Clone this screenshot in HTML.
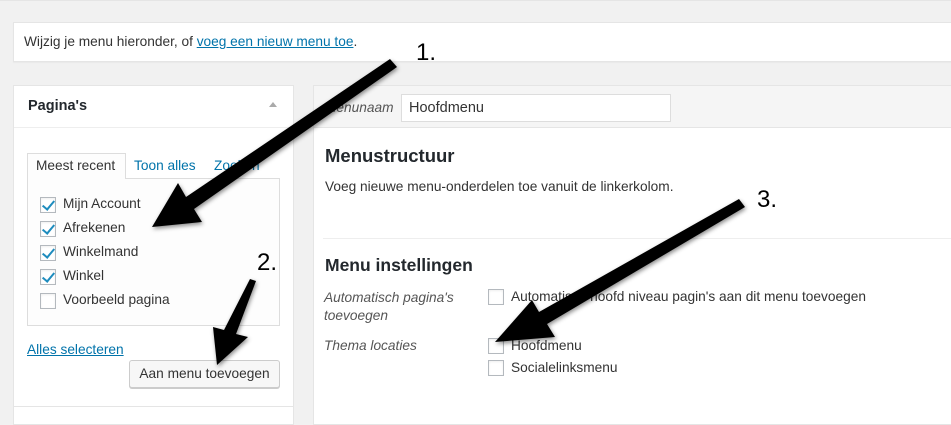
<!DOCTYPE html>
<html><head><meta charset="utf-8"><style>
*{box-sizing:border-box;margin:0;padding:0}
body{width:951px;height:413px;overflow:hidden;background:#f1f1f1;font-family:"Liberation Sans",sans-serif;font-size:13.7px;color:#333;position:relative}
.a{position:absolute}
a{color:#0073aa;text-decoration:underline}
.cb{position:absolute;width:16px;height:16px;border:1px solid #b4b9be;background:#fff;box-shadow:inset 0 1px 2px rgba(0,0,0,.07)}
.cb.c::after{content:"";position:absolute;left:4px;top:0px;width:5px;height:10px;border:solid #1e8cbe;border-width:0 2.5px 2.5px 0;transform:rotate(40deg)}
</style></head><body>
<div class="a" style="left:0;top:0;width:951px;height:1px;background:#e5e5e5"></div>
<div class="a" style="left:13px;top:22px;width:940px;height:40px;background:#fff;border:1px solid #e5e5e5;box-shadow:0 1px 1px rgba(0,0,0,.04)"></div>
<div class="a" style="left:24px;top:34px">Wijzig je menu hieronder, of <a>voeg een nieuw menu toe</a>.</div>

<div class="a" style="left:13px;top:85px;width:281px;height:340px;background:#fff;border:1px solid #e5e5e5"></div>
<div class="a" style="left:14px;top:86px;width:279px;height:42px;border-bottom:1px solid #eee"></div>
<div class="a" style="left:28px;top:98px;font-size:14.5px;font-weight:bold;color:#23282d">Pagina's</div>
<div class="a" style="left:269px;top:102px;width:0;height:0;border-left:4px solid transparent;border-right:4px solid transparent;border-bottom:5px solid #aaa"></div>

<div class="a" style="left:27px;top:178px;width:253px;height:148px;background:#fdfdfd;border:1px solid #ddd"></div>
<div class="a" style="left:27px;top:153px;width:99px;height:26px;background:#fdfdfd;border:1px solid #ddd;border-bottom:none"></div>
<div class="a" style="left:36px;top:158px">Meest recent</div>
<div class="a" style="left:134px;top:158px;color:#0073aa">Toon alles</div>
<div class="a" style="left:214px;top:158px;color:#0073aa">Zoeken</div>
<div class="cb c" style="left:40px;top:197px"></div><div class="a" style="left:63px;top:196px">Mijn Account</div>
<div class="cb c" style="left:40px;top:221px"></div><div class="a" style="left:63px;top:220px">Afrekenen</div>
<div class="cb c" style="left:40px;top:245px"></div><div class="a" style="left:63px;top:244px">Winkelmand</div>
<div class="cb c" style="left:40px;top:269px"></div><div class="a" style="left:63px;top:268px">Winkel</div>
<div class="cb" style="left:40px;top:293px"></div><div class="a" style="left:63px;top:292px">Voorbeeld pagina</div>
<div class="a" style="left:27px;top:342px"><a>Alles selecteren</a></div>
<div class="a" style="left:129px;top:360px;width:151px;height:28px;border:1px solid #ccc;border-radius:3px;background:#f7f7f7;box-shadow:0 1px 0 #ccc;text-align:center;line-height:26px">Aan menu toevoegen</div>
<div class="a" style="left:14px;top:406px;width:279px;height:1px;background:#e5e5e5"></div>

<div class="a" style="left:313px;top:85px;width:640px;height:340px;background:#fff;border:1px solid #e5e5e5"></div>
<div class="a" style="left:314px;top:86px;width:638px;height:42px;background:#f5f5f5;border-bottom:1px solid #e5e5e5"></div>
<div class="a" style="left:325px;top:100px;font-style:italic;color:#555">Menunaam</div>
<div class="a" style="left:401px;top:94px;width:270px;height:28px;background:#fff;border:1px solid #ddd;padding:5px 7px;font-size:14.5px;color:#333">Hoofdmenu</div>
<div class="a" style="left:325px;top:145px;font-size:18.5px;font-weight:bold;color:#23282d">Menustructuur</div>
<div class="a" style="left:325px;top:179px">Voeg nieuwe menu-onderdelen toe vanuit de linkerkolom.</div>
<div class="a" style="left:323px;top:238px;width:628px;height:1px;background:#eee"></div>
<div class="a" style="left:325px;top:255px;font-size:17.5px;font-weight:bold;color:#23282d">Menu instellingen</div>
<div class="a" style="left:324px;top:289px;font-style:italic;color:#555;line-height:18px">Automatisch pagina's<br>toevoegen</div>
<div class="a" style="left:324px;top:338px;font-style:italic;color:#555">Thema locaties</div>
<div class="cb" style="left:488px;top:289px"></div><div class="a" style="left:511px;top:289px">Automatisch hoofd niveau pagin's aan dit menu toevoegen</div>
<div class="cb" style="left:488px;top:338px"></div><div class="a" style="left:511px;top:338px">Hoofdmenu</div>
<div class="cb" style="left:488px;top:360px"></div><div class="a" style="left:511px;top:360px">Socialelinksmenu</div>

<svg class="a" style="left:0;top:0" width="951" height="413">
<defs><filter id="s"><feDropShadow dx="1" dy="2" stdDeviation="2" flood-opacity=".45"/></filter></defs>
<g fill="#000" filter="url(#s)">
<polygon points="390,59 397,67 194,209 202,222 152,227 178,183 186,197"/>
<polygon points="250,279 256,281 236,334 248,337 217,365 213,327 224,330"/>
<polygon points="739,199 745,207 547,324 555,337 495,342 532,300 539,312"/>
</g>
<g font-family="Liberation Sans,sans-serif" font-size="24" fill="#000">
<text x="416" y="60">1.</text><text x="257" y="270">2.</text><text x="757" y="207">3.</text>
</g>
</svg>
</body></html>
